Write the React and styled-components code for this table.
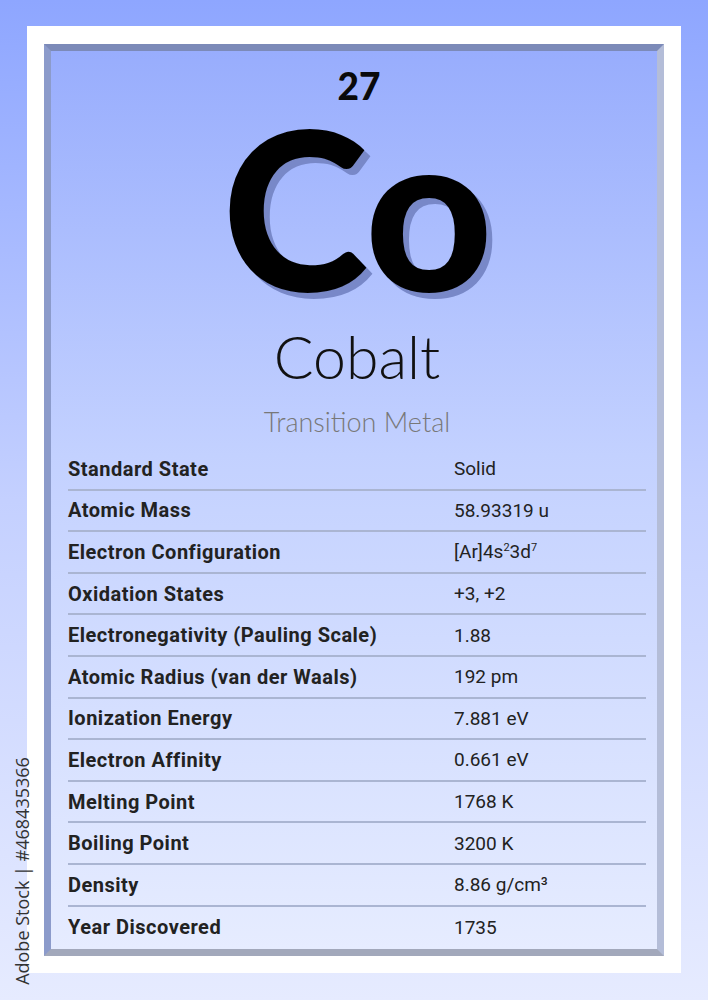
import styled, { createGlobalStyle } from 'styled-components';

const GlobalStyle = createGlobalStyle`
  html, body {
    margin: 0;
    padding: 0;
  }
  body {
    font-family: 'Roboto', 'Liberation Sans', sans-serif;
  }
`

const rows = [
  { label: 'Standard State', value: 'Solid' },
  { label: 'Atomic Mass', value: '58.93319 u' },
  { label: 'Electron Configuration', value: <>[Ar]4s<sup>2</sup>3d<sup>7</sup></> },
  { label: 'Oxidation States', value: '+3, +2' },
  { label: 'Electronegativity (Pauling Scale)', value: '1.88' },
  { label: 'Atomic Radius (van der Waals)', value: '192 pm' },
  { label: 'Ionization Energy', value: '7.881 eV' },
  { label: 'Electron Affinity', value: '0.661 eV' },
  { label: 'Melting Point', value: '1768 K' },
  { label: 'Boiling Point', value: '3200 K' },
  { label: 'Density', value: '8.86 g/cm³' },
  { label: 'Year Discovered', value: '1735' },
]

export default function App() {
  return (
    <Page>
      <GlobalStyle />
      <Frame>
        <Card>
          <Number>27</Number>
          <Symbol>Co</Symbol>
          <Name>Cobalt</Name>
          <Category>Transition Metal</Category>
          <Table>
            {rows.map((r) => (
              <Row key={r.label}>
                <Label>{r.label}</Label>
                <Value>{r.value}</Value>
              </Row>
            ))}
          </Table>
        </Card>
      </Frame>
      <StockId>Adobe Stock | #468435366</StockId>
    </Page>
  )
}

const Page = styled.div`
  position: relative;
  width: 708px;
  height: 1000px;
  box-sizing: border-box;
  padding: 26px 27px 0 27px;
  background: linear-gradient(180deg, #8ea6ff 0%, #c4d0ff 50%, #e6ebff 100%);
  overflow: hidden;
`
const Frame = styled.div`
  width: 654px;
  height: 947px;
  box-sizing: border-box;
  padding: 18px 17px 17px 17px;
  background: #ffffff;
`
const Card = styled.div`
  height: 100%;
  box-sizing: border-box;
  border-style: solid;
  border-width: 7px;
  border-color: #7c8ab8 #b4bdd8 #a2a8bb #8c9bcb;
  background: linear-gradient(180deg, #98adfd 0%, #c3d1ff 45%, #e6ecff 100%);
  display: flex;
  flex-direction: column;
  align-items: center;
  padding: 15px 11px 0 17px;
`
const Number = styled.div`
  font-family: 'Lato', 'Roboto', sans-serif;
  font-weight: 900;
  font-size: 37px;
  line-height: 40px;
  color: #0a0a0a;
  margin-left: 4px;
`
const Symbol = styled.div`
  font-family: 'Lato', 'Roboto', sans-serif;
  font-weight: 900;
  font-size: 222px;
  line-height: 200px;
  letter-spacing: -1px;
  color: #000;
  text-shadow: 6px 6px 0 #7888c8;
  margin-top: -1px;
`
const Name = styled.div`
  font-family: 'Lato', 'Roboto', sans-serif;
  font-weight: 300;
  font-size: 59px;
  line-height: 72px;
  color: #111;
  margin-top: 16px;
`
const Category = styled.div`
  font-family: 'Lato', 'Roboto', sans-serif;
  font-weight: 300;
  font-size: 27px;
  line-height: 34px;
  color: #787878;
  margin-top: 12px;
`
const Table = styled.div`
  align-self: stretch;
  display: flex;
  flex-direction: column;
  margin-top: 10px;
`
const Row = styled.div`
  display: grid;
  grid-template-columns: 386px 1fr;
  align-items: center;
  height: 41.6px;
  box-sizing: border-box;
  border-bottom: 2px solid #aab5d2;

  &:last-child {
    border-bottom: none;
  }
`
const Label = styled.div`
  font-family: 'Roboto', sans-serif;
  font-weight: 700;
  font-size: 20px;
  letter-spacing: 0.5px;
  color: #222;
`
const Value = styled.div`
  font-family: 'Roboto', sans-serif;
  font-weight: 400;
  font-size: 19px;
  color: #222;

  sup {
    font-size: 11px;
    line-height: 0;
  }
`
const StockId = styled.div`
  position: absolute;
  left: 22px;
  top: 871px;
  transform: translate(-50%, -50%) rotate(-90deg);
  white-space: nowrap;
  font-family: 'Open Sans', sans-serif;
  font-size: 18px;
  color: #333;
`
